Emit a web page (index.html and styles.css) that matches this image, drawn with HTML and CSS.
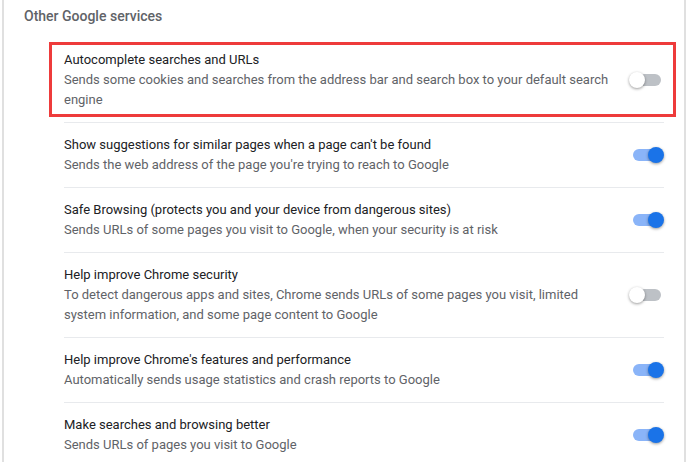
FILE: index.html
```html
<!DOCTYPE html>
<html>
<head>
<meta charset="utf-8">
<link rel="stylesheet" href="styles.css">
</head>
<body>
<div class="card">
  <div class="heading">Other Google services</div>
  <div class="list">
    <div class="row highlighted">
      <div class="text">
        <div class="title">Autocomplete searches and URLs</div>
        <div class="sub">Sends some cookies and searches from the address bar and search box to your default search engine</div>
      </div>
      <span class="toggle"><span class="track"></span><span class="knob"></span></span>
    </div>
    <div class="row">
      <div class="text">
        <div class="title">Show suggestions for similar pages when a page can't be found</div>
        <div class="sub">Sends the web address of the page you're trying to reach to Google</div>
      </div>
      <span class="toggle on"><span class="track"></span><span class="knob"></span></span>
    </div>
    <div class="row">
      <div class="text">
        <div class="title">Safe Browsing (protects you and your device from dangerous sites)</div>
        <div class="sub">Sends URLs of some pages you visit to Google, when your security is at risk</div>
      </div>
      <span class="toggle on"><span class="track"></span><span class="knob"></span></span>
    </div>
    <div class="row">
      <div class="text">
        <div class="title">Help improve Chrome security</div>
        <div class="sub">To detect dangerous apps and sites, Chrome sends URLs of some pages you visit, limited system information, and some page content to Google</div>
      </div>
      <span class="toggle"><span class="track"></span><span class="knob"></span></span>
    </div>
    <div class="row">
      <div class="text">
        <div class="title">Help improve Chrome's features and performance</div>
        <div class="sub">Automatically sends usage statistics and crash reports to Google</div>
      </div>
      <span class="toggle on"><span class="track"></span><span class="knob"></span></span>
    </div>
    <div class="row">
      <div class="text">
        <div class="title">Make searches and browsing better</div>
        <div class="sub">Sends URLs of pages you visit to Google</div>
      </div>
      <span class="toggle on"><span class="track"></span><span class="knob"></span></span>
    </div>
  </div>
</div>
</body>
</html>
```
FILE: styles.css
```css
html, body {
  margin: 0;
  padding: 0;
  background: #ffffff;
  font-family: Roboto, "Liberation Sans", sans-serif;
  font-size: 13px;
  line-height: 20px;
  overflow: hidden;
}
.card {
  margin-left: 2px;
  width: 680px;
  height: 470px;
  border-left: 2px solid #e0e0e0;
  border-right: 2px solid #e0e0e0;
  box-sizing: content-box;
}
.heading {
  padding: 6px 0 0 20px;
  font-size: 14px;
  font-weight: 500;
  color: #5f6368;
  line-height: 20px;
}
.list {
  margin: 12px 0 0 60px;
  width: 600px;
}
.row {
  position: relative;
  display: flex;
  align-items: center;
  gap: 14px;
  padding: 12px 0;
  border-top: 1px solid #e8eaed;
}
.row:first-child {
  border-top: none;
}
.text {
  width: 550px;
}
.title {
  color: #202124;
}
.sub {
  color: #5f6368;
}
.highlighted::after {
  content: "";
  position: absolute;
  left: -15px;
  right: -12px;
  top: 4px;
  bottom: 5px;
  border: 3px solid #ee3b3b;
  pointer-events: none;
}
.toggle {
  position: relative;
  display: block;
  width: 36px;
  height: 16px;
  flex: none;
}
.track {
  position: absolute;
  left: 5px;
  top: 2px;
  width: 28px;
  height: 12px;
  border-radius: 6px;
  background: #bdc1c6;
}
.knob {
  position: absolute;
  left: 1px;
  top: 0;
  width: 16px;
  height: 16px;
  border-radius: 50%;
  background: #ffffff;
  box-shadow: 0 1px 3px rgba(0, 0, 0, 0.4);
}
.toggle.on .track {
  background: #8ab4f8;
}
.toggle.on .knob {
  left: 20px;
  background: #1a73e8;
}
```
